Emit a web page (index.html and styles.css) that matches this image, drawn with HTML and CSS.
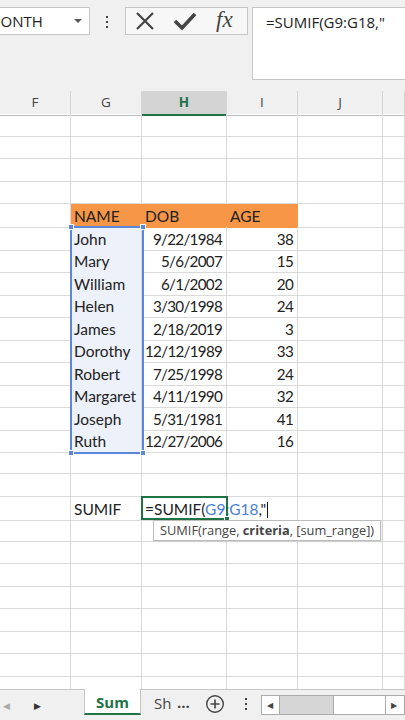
FILE: index.html
```html
<!DOCTYPE html>
<html lang="en">
<head>
  <meta charset="UTF-8" />
  <meta name="viewport" content="width=device-width, initial-scale=1.0"/>
  <title>Sum - Excel</title>
  <link rel="stylesheet" href="styles.css">
</head>
<body>
  <div class="toolbar">
    <div class="namebox">
      <span class="name">MONTH</span>
      <span class="caret"></span>
    </div>
    <div class="vdots"><i></i><i></i><i></i></div>
    <div class="fbtns">
      <svg class="ico" width="22" height="22" viewBox="0 0 22 22">
        <path d="M3 3 L19 19 M19 3 L3 19" stroke="#444" stroke-width="2.2" fill="none"/>
      </svg>
      <svg class="ico" width="24" height="22" viewBox="0 0 24 22">
        <path d="M2 11 L9 18 L22 4" stroke="#444" stroke-width="3.6" fill="none"/>
      </svg>
      <span class="fx">fx</span>
    </div>
    <div class="formula">=SUMIF(G9:G18,"</div>
  </div>

  <div class="sheet">
    <div class="colheads">
      <div>F</div><div>G</div><div class="sel">H</div><div>I</div><div>J</div><div></div>
    </div>
    <div class="grid" id="grid">
      <!-- rows are filled in below -->
    </div>
    <div class="range">
      <i class="handle tl"></i><i class="handle tr"></i>
      <i class="handle bl"></i><i class="handle br"></i>
    </div>
    <div class="active-cell"><i class="fill"></i></div>
    <div class="tip">SUMIF(range, <b>criteria</b>, [sum_range])</div>
  </div>

  <div class="tabs">
    <div class="nav"><span class="arr off">&#9664;</span><span class="arr">&#9654;</span></div>
    <div class="tab active">Sum</div>
    <div class="tab">Sh</div>
    <div class="more">...</div>
    <svg class="plus" width="20" height="20" viewBox="0 0 20 20">
      <circle cx="10" cy="10" r="8.3" stroke="#444" stroke-width="1.4" fill="none"/>
      <path d="M10 5.5 V14.5 M5.5 10 H14.5" stroke="#444" stroke-width="1.6"/>
    </svg>
    <div class="vdots small"><i></i><i></i><i></i></div>
    <div class="hscroll">
      <span class="sbtn">&#9664;</span>
      <span class="thumb"></span>
      <span class="track"></span>
      <span class="sbtn">&#9654;</span>
    </div>
  </div>

  <script>
    const grid = document.getElementById("grid");

    const people = [
      ["John", "9/22/1984", 38],
      ["Mary", "5/6/2007", 15],
      ["William", "6/1/2002", 20],
      ["Helen", "3/30/1998", 24],
      ["James", "2/18/2019", 3],
      ["Dorothy", "12/12/1989", 33],
      ["Robert", "7/25/1998", 24],
      ["Margaret", "4/11/1990", 32],
      ["Joseph", "5/31/1981", 41],
      ["Ruth", "12/27/2006", 16]
    ];

    function row(cells, cls = "") {
      let html = `<div class="row ${cls}">`;
      cells.forEach(c => {
        html += `<div class="cell ${c.cls || ""}">${c.text || ""}</div>`;
      });
      return html + "</div>";
    }

    const empty = () => [{}, {}, {}, {}, {}, {}];
    let out = "";

    for (let i = 0; i < 4; i++) out += row(empty());

    out += row([{}, {text: "NAME", cls: "head"}, {text: "DOB", cls: "head"}, {text: "AGE", cls: "head"}, {}, {}]);

    people.forEach(p => {
      out += row([{}, {text: p[0], cls: "picked"}, {text: p[1], cls: "num"}, {text: p[2], cls: "num"}, {}, {}]);
    });

    out += row(empty());
    out += row(empty());
    out += row([{}, {text: "SUMIF"}, {text: '=SUMIF(<span class="ref">G9:G18</span>,"<span class="cursor"></span>', cls: "editing"}, {}, {}, {}]);

    for (let i = 0; i < 8; i++) out += row(empty());

    grid.innerHTML = out;
  </script>
</body>
</html>
```

FILE: styles.css
```css
* {
  margin: 0; padding: 0;
  box-sizing: border-box;
}
body {
  width: 405px;
  height: 720px;
  overflow: hidden;
  background-color: #f0f0f0;
  font-family: 'Open Sans', sans-serif;
  color: #222;
}

/* formula bar */
.toolbar {
  height: 91px;
  display: flex;
  align-items: flex-start;
  padding-top: 7px;
  background-color: #f0f0f0;
}
.toolbar > * {
  flex-shrink: 0;
}
.namebox {
  margin-left: -20px;
  width: 110px;
  height: 28px;
  background-color: white;
  border: 1px solid #c6c6c6;
  display: flex;
  align-items: center;
  padding-left: 6px;
  font-size: 15px;
}
.namebox .name {
  flex: 1;
}
.namebox .caret {
  width: 0; height: 0;
  border-left: 4px solid transparent;
  border-right: 4px solid transparent;
  border-top: 4px solid #555;
  margin-right: 7px;
}
.vdots {
  margin: 9px 0 0 16px;
  width: 3px;
  display: flex;
  flex-direction: column;
  gap: 3px;
}
.vdots i {
  width: 2px;
  height: 2px;
  background-color: #444;
}
.fbtns {
  margin-left: 16px;
  width: 123px;
  height: 28px;
  border: 1px solid #c6c6c6;
  background-color: #f7f7f7;
  display: flex;
  align-items: center;
  padding-left: 8px;
  gap: 17px;
}
.fbtns .fx {
  font-family: 'Liberation Serif', serif;
  font-style: italic;
  font-size: 23px;
  color: #444;
  margin-left: 2px;
  margin-top: -2px;
}
.formula {
  margin-left: 4px;
  width: 170px;
  height: 73px;
  background-color: white;
  border: 1px solid #c6c6c6;
  padding: 4px 13px;
  font-size: 15px;
}

/* sheet */
.sheet {
  position: relative;
  height: 598px;
  overflow: hidden;
  background-color: white;
  font-family: 'Lato', sans-serif;
}
.colheads, .row {
  display: grid;
  grid-template-columns: 71px 71px 85px 71px 85px 1fr;
}
.colheads {
  height: 23px;
  background-color: #f0f0f0;
}
.colheads div {
  border-right: 1px solid #d4d4d4;
  border-bottom: 1px solid #bdbdbd;
  text-align: center;
  font-family: 'Open Sans', sans-serif;
  font-size: 13.5px;
  line-height: 23px;
  color: #444;
}
.colheads .sel {
  background-color: #d4d4d4;
  border-bottom: 2px solid #217346;
  color: #217346;
  font-weight: bold;
}
.row {
  height: 22.5px;
}
.cell {
  border-right: 1px solid #dadada;
  border-bottom: 1px solid #dadada;
  font-size: 15.5px;
  line-height: 21px;
  padding: 2px 3px 0;
  white-space: nowrap;
  color: #222;
}
.cell.head {
  background-color: #f79646;
  border-color: #f79646;
}
.cell.picked {
  background-color: #edf1fa;
}
.cell.num {
  text-align: right;
  font-size: 15.2px;
  letter-spacing: -0.7px;
  padding-right: 4px;
}
.cell.editing .ref {
  color: #4a7fd3;
}
.cursor {
  display: inline-block;
  width: 1px;
  height: 16px;
  background-color: #111;
  vertical-align: -3px;
  margin-left: 1px;
}

/* selection overlays */
.range {
  position: absolute;
  left: 70px;
  top: 134.5px;
  width: 74px;
  height: 228px;
  border: 2px solid #5b87da;
}
.handle {
  position: absolute;
  width: 6px;
  height: 6px;
  background-color: #5b87da;
  border: 1px solid white;
}
.handle.tl { left: -4px; top: -4px; }
.handle.tr { right: -4px; top: -4px; }
.handle.bl { left: -4px; bottom: -4px; }
.handle.br { right: -4px; bottom: -4px; }

.active-cell {
  position: absolute;
  left: 141px;
  top: 404.5px;
  width: 87px;
  height: 24px;
  border: 2px solid #217346;
}
.active-cell .fill {
  position: absolute;
  right: -4px;
  bottom: -4px;
  width: 6px;
  height: 6px;
  background-color: #217346;
  border: 1px solid white;
}
.tip {
  position: absolute;
  left: 153px;
  top: 429px;
  height: 21px;
  padding: 0 6px;
  background-color: white;
  border: 1px solid #bcbcbc;
  font-family: 'Open Sans', sans-serif;
  font-size: 12.8px;
  line-height: 19px;
  color: #444;
  box-shadow: 1px 1px 2px rgba(0,0,0,0.08);
}

/* sheet tabs */
.tabs {
  height: 31px;
  border-top: 1px solid #c6c6c6;
  background-color: #f0f0f0;
  display: flex;
  align-items: flex-start;
  font-size: 15px;
}
.tabs > * {
  flex-shrink: 0;
}
.nav {
  width: 84px;
  display: flex;
  gap: 24px;
  padding: 5px 0 0 3px;
  font-size: 9px;
  line-height: 22px;
}
.nav .arr { color: #333; }
.nav .arr.off { color: #aaa; }
.tab {
  height: 25px;
  line-height: 26px;
  color: #444;
}
.tab.active {
  width: 57px;
  margin-top: -1px;
  height: 26px;
  background-color: white;
  border-left: 1px solid #c6c6c6;
  border-right: 1px solid #c6c6c6;
  border-bottom: 2px solid #217346;
  color: #217346;
  font-weight: bold;
  text-align: center;
}
.tab + .tab {
  margin-left: 13px;
  width: 20px;
  overflow: hidden;
}
.more {
  margin-left: 3px;
  line-height: 24px;
  font-weight: bold;
  color: #444;
}
.plus {
  margin: 4px 0 0 15px;
}
.vdots.small {
  margin: 8px 0 0 20px;
}
.hscroll {
  margin: 5px 0 0 13px;
  display: flex;
  height: 20px;
  border: 1px solid #ababab;
  background-color: white;
  flex: 1;
  flex-shrink: 1;
}
.hscroll .sbtn {
  width: 17px;
  font-size: 8px;
  line-height: 18px;
  text-align: center;
  color: #444;
}
.hscroll .thumb {
  width: 54px;
  background-color: #d6d6d6;
  border-left: 1px solid #ababab;
}
.hscroll .track {
  width: 53px;
  border-left: 1px solid #ababab;
  border-right: 1px solid #ababab;
}
```
